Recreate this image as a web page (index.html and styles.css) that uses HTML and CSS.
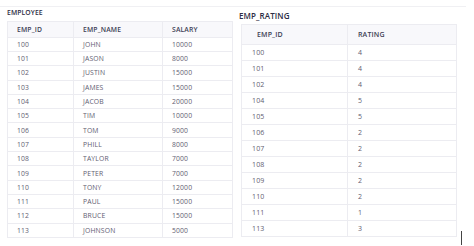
FILE: index.html
```html
<!DOCTYPE html>
<html>
<head>
<meta charset="utf-8">
<link rel="stylesheet" href="styles.css">
</head>
<body>
<div class="page">
  <div class="topline"></div>
  <div class="panels">
    <section class="panel left">
      <h2 class="title t-emp">EMPLOYEE</h2>
      <table class="grid emp">
        <colgroup><col class="c1"><col class="c2"><col class="c3"></colgroup>
        <thead><tr><th>EMP_ID</th><th>EMP_NAME</th><th>SALARY</th></tr></thead>
        <tbody>
          <tr><td>100</td><td>JOHN</td><td>10000</td></tr>
          <tr><td>101</td><td>JASON</td><td>8000</td></tr>
          <tr><td>102</td><td>JUSTIN</td><td>15000</td></tr>
          <tr><td>103</td><td>JAMES</td><td>15000</td></tr>
          <tr><td>104</td><td>JACOB</td><td>20000</td></tr>
          <tr><td>105</td><td>TIM</td><td>10000</td></tr>
          <tr><td>106</td><td>TOM</td><td>9000</td></tr>
          <tr><td>107</td><td>PHILL</td><td>8000</td></tr>
          <tr><td>108</td><td>TAYLOR</td><td>7000</td></tr>
          <tr><td>109</td><td>PETER</td><td>7000</td></tr>
          <tr><td>110</td><td>TONY</td><td>12000</td></tr>
          <tr><td>111</td><td>PAUL</td><td>15000</td></tr>
          <tr><td>112</td><td>BRUCE</td><td>15000</td></tr>
          <tr><td>113</td><td>JOHNSON</td><td>5000</td></tr>
        </tbody>
      </table>
    </section>
    <section class="panel right">
      <h2 class="title t-rating">EMP_RATING</h2>
      <table class="grid rating">
        <colgroup><col class="r1"><col class="r2"></colgroup>
        <thead><tr><th>EMP_ID</th><th>RATING</th></tr></thead>
        <tbody>
          <tr><td>100</td><td>4</td></tr>
          <tr><td>101</td><td>4</td></tr>
          <tr><td>102</td><td>4</td></tr>
          <tr><td>104</td><td>5</td></tr>
          <tr><td>105</td><td>5</td></tr>
          <tr><td>106</td><td>2</td></tr>
          <tr><td>107</td><td>2</td></tr>
          <tr><td>108</td><td>2</td></tr>
          <tr><td>109</td><td>2</td></tr>
          <tr><td>110</td><td>2</td></tr>
          <tr><td>111</td><td>1</td></tr>
          <tr><td>113</td><td>3</td></tr>
        </tbody>
      </table>
    </section>
    <div class="caret"></div>
  </div>
</div>
</body>
</html>
```

FILE: styles.css
```css
html, body {
  margin: 0;
  padding: 0;
  background: #ffffff;
}
body {
  width: 474px;
  height: 246px;
  overflow: hidden;
  font-family: "Open Sans", "Noto Sans", sans-serif;
  color: #5f6072;
}
.page {
  position: relative;
  width: 474px;
  height: 246px;
}
.topline {
  height: 1px;
  margin: 6px 8px 0 0;
  background: #f0f0f3;
}
.panels {
  display: flex;
  align-items: flex-start;
}
.panel.left {
  width: 225px;
  margin-left: 7px;
}
.panel.right {
  width: 215px;
  margin-left: 9px;
}
.title {
  margin: 0;
  font-weight: 600;
  color: #2c2d44;
  white-space: nowrap;
}
.t-emp {
  font-size: 6.8px;
  line-height: 9px;
  margin-top: 1px;
  height: 13px;
  letter-spacing: 0.1px;
}
.t-rating {
  font-size: 8px;
  line-height: 10px;
  margin-top: 4px;
  margin-left: -2px;
  height: 13px;
  letter-spacing: 0.1px;
}
.grid {
  border-collapse: collapse;
  table-layout: fixed;
  width: 100%;
  border: 1px solid #ececf1;
}
.grid th, .grid td {
  border: 1px solid #ececf1;
  text-align: left;
  padding: 0;
  white-space: nowrap;
  overflow: hidden;
  letter-spacing: 0.15px;
}
.grid th {
  background: #f8f8fb;
  font-weight: 600;
  color: #3e3f56;
}
.emp .c1 { width: 66px; }
.emp .c2 { width: 89px; }
.emp .c3 { width: 70px; }
.emp th, .emp td {
  font-size: 6.8px;
  padding-left: 9px;
}
.emp th { height: 14.7px; }
.emp td { height: 13.3px; }
.rating .r1 { width: 106px; }
.rating .r2 { width: 109px; }
.rating th, .rating td {
  font-size: 7px;
  padding-left: 10px;
}
.rating th {
  height: 19px;
}
.rating th:first-child { padding-left: 15px; }
.rating td { height: 15px; }
.caret {
  position: absolute;
  left: 461px;
  top: 225px;
  width: 1px;
  height: 14px;
  background: #444;
}
```
